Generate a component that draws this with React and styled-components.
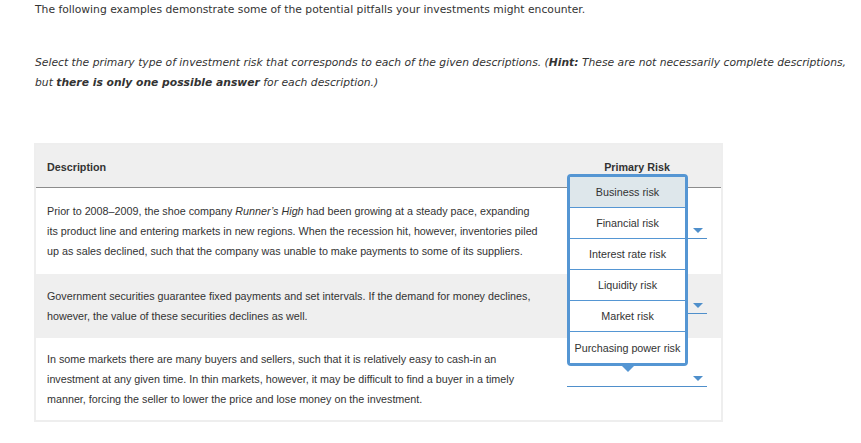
import React from "react";
import styled, { createGlobalStyle } from "styled-components";

const Global = createGlobalStyle`
  html, body { margin: 0; padding: 0; background: #fff; }
  body { color: #333; }
`;

const Page = styled.div`
  padding: 0 34px;
  width: 861px;
  height: 443px;
  box-sizing: border-box;
  overflow: hidden;
`;

const Para = styled.p`
  margin: ${(p) => p.$mt || 0}px 0 0 0;
  padding-left: 1px;
  font-family: "DejaVu Sans", Verdana, sans-serif;
  font-size: 10.75px;
  line-height: 20px;
  color: #333;
  font-style: ${(p) => (p.$italic ? "italic" : "normal")};
  white-space: nowrap;
  b { font-weight: bold; }
`;

const Table = styled.div`
  position: relative;
  margin-top: 50px;
  width: 689px;
  border: 2px solid #eeeeee;
  box-sizing: border-box;
  font-family: "Liberation Sans", Arial, sans-serif;
  font-size: 10.75px;
  color: #333;
`;

const Row = styled.div`
  display: grid;
  grid-template-columns: 1fr 140px;
  padding-right: 14px;
  background: ${(p) => (p.$shade ? "#efefef" : "#ffffff")};
  border-bottom: ${(p) => (p.$head ? "1px solid #8c8c8c" : "none")};
  min-height: ${(p) => (p.$head ? "42px" : "0")};
`;

const HeadCell = styled.div`
  display: flex;
  align-items: center;
  justify-content: ${(p) => (p.$center ? "center" : "flex-start")};
  padding: ${(p) => (p.$center ? "0" : "0 0 0 11px")};
  font-weight: bold;
  line-height: 20px;
  padding-top: 1px;
`;

const DescCell = styled.div`
  padding: ${(p) => p.$pad || "13px 0 13px 11px"};
  line-height: 20px;
  white-space: nowrap;
`;

const SelectCell = styled.div`
  display: flex;
  align-items: center;
`;

const Select = styled.div`
  position: relative;
  width: 140px;
  height: 15px;
  border-bottom: 1px solid #4f8fcb;
  display: flex;
  justify-content: flex-end;
  align-items: center;
  padding-right: 4px;
  box-sizing: border-box;
`;

const Caret = styled.span`
  width: 0;
  height: 0;
  border-left: 5.5px solid transparent;
  border-right: 5.5px solid transparent;
  border-top: 5px solid #4f8fcb;
`;

const Popup = styled.div`
  position: absolute;
  left: 531px;
  top: 29px;
  width: 121px;
  box-sizing: border-box;
  border: 3px solid #5596d3;
  border-radius: 4px;
  background: #fff;
  z-index: 2;
  &::after {
    content: "";
    position: absolute;
    left: 50%;
    bottom: -9px;
    transform: translateX(-50%);
    border-left: 6px solid transparent;
    border-right: 6px solid transparent;
    border-top: 6px solid #5596d3;
  }
`;

const Option = styled.div`
  height: 31px;
  box-sizing: border-box;
  display: flex;
  align-items: center;
  justify-content: center;
  background: ${(p) => (p.$active ? "#dee7eb" : "#fff")};
  border-bottom: ${(p) => (p.$last ? "none" : "1px solid #5596d3")};
  white-space: nowrap;
  color: #333;
`;

const options = [
  "Business risk",
  "Financial risk",
  "Interest rate risk",
  "Liquidity risk",
  "Market risk",
  "Purchasing power risk",
];

export default function App() {
  return (
    <>
      <Global />
      <Page>
        <Para>
          The following examples demonstrate some of the potential pitfalls your investments might encounter.
        </Para>
        <Para $italic $mt={33}>
          Select the primary type of investment risk that corresponds to each of the given descriptions. (<b>Hint:</b> These are not necessarily complete descriptions,
          <br />
          but <b>there is only one possible answer</b> for each description.)
        </Para>
        <Table>
          <Row $head $shade>
            <HeadCell>Description</HeadCell>
            <HeadCell $center>Primary Risk</HeadCell>
          </Row>
          <Row>
            <DescCell>
              Prior to 2008–2009, the shoe company <i>Runner’s High</i> had been growing at a steady pace, expanding
              <br />
              its product line and entering markets in new regions. When the recession hit, however, inventories piled
              <br />
              up as sales declined, such that the company was unable to make payments to some of its suppliers.
            </DescCell>
            <SelectCell>
              <Select><Caret /></Select>
            </SelectCell>
          </Row>
          <Row $shade>
            <DescCell $pad="12px 0 12px 11px">
              Government securities guarantee fixed payments and set intervals. If the demand for money declines,
              <br />
              however, the value of these securities declines as well.
            </DescCell>
            <SelectCell>
              <Select><Caret /></Select>
            </SelectCell>
          </Row>
          <Row>
            <DescCell $pad="11px 0 11px 11px">
              In some markets there are many buyers and sellers, such that it is relatively easy to cash-in an
              <br />
              investment at any given time. In thin markets, however, it may be difficult to find a buyer in a timely
              <br />
              manner, forcing the seller to lower the price and lose money on the investment.
            </DescCell>
            <SelectCell>
              <Select><Caret /></Select>
            </SelectCell>
          </Row>
          <Popup>
            {options.map((o, i) => (
              <Option key={o} $active={i === 0} $last={i === options.length - 1}>
                {o}
              </Option>
            ))}
          </Popup>
        </Table>
      </Page>
    </>
  );
}
